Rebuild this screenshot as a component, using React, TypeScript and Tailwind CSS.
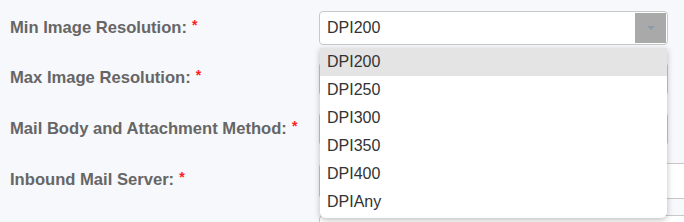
import React from 'react';

const options = ['DPI200', 'DPI250', 'DPI300', 'DPI350', 'DPI400', 'DPIAny'];

function Label({ text }: { text: string }) {
  return (
    <div className="w-[319px] shrink-0 pl-[10px] text-[16.6px] font-bold text-[#666666]">
      {text}
      <span className="relative -top-[3px] ml-[5px] text-[14px] text-[#ff2020]">*</span>
    </div>
  );
}

function SelectBox({ value, open }: { value?: string; open?: boolean }) {
  return (
    <div className="relative h-[34px] w-[349px] shrink-0 rounded-[4px] border border-[#c8c8c8] bg-white">
      <div className="flex h-full items-center pl-[7px] text-[16px] text-[#333333]">{value}</div>
      <div className="absolute right-[1px] top-[1px] flex h-[30px] w-[31px] items-center justify-center bg-[#a9a9a9]">
        <svg width="10" height="6" viewBox="0 0 10 6">
          <path d="M1 1h8L5 5z" fill="#8b9bab" />
        </svg>
      </div>
      {open && (
        <div className="absolute left-0 right-0 top-[36px] z-10 rounded-b-[6px] bg-white pb-[2px] shadow-[0_2px_6px_rgba(0,0,0,0.25)]">
          {options.map((o, i) => (
            <div
              key={o}
              className={`flex h-[28px] items-center pl-[7px] text-[16px] text-[#333333] ${i === 0 ? 'bg-[#e4e4e4]' : ''}`}
            >
              {o}
            </div>
          ))}
        </div>
      )}
    </div>
  );
}

export default function App() {
  return (
    <div
      className="h-[222px] w-[684px] overflow-hidden bg-[#f7f8fc] pt-[11px]"
      style={{ fontFamily: '"Liberation Sans", Arial, sans-serif' }}
    >
      <div className="flex flex-col gap-[16.5px]">
        <div className="relative z-10 flex items-center">
          <Label text="Min Image Resolution:" />
          <SelectBox value="DPI200" open />
        </div>
        <div className="flex items-center">
          <Label text="Max Image Resolution:" />
          <SelectBox />
        </div>
        <div className="flex items-center">
          <Label text="Mail Body and Attachment Method:" />
          <SelectBox />
        </div>
        <div className="flex items-center">
          <Label text="Inbound Mail Server:" />
          <div className="h-[36px] w-[420px] shrink-0 rounded-[4px] border border-[#c8c8c8] bg-white" />
        </div>
        <div className="flex items-center">
          <div className="w-[319px] shrink-0" />
          <div className="h-[34px] w-[420px] shrink-0 rounded-[4px] border border-[#c8c8c8] bg-white" />
        </div>
      </div>
    </div>
  );
}
